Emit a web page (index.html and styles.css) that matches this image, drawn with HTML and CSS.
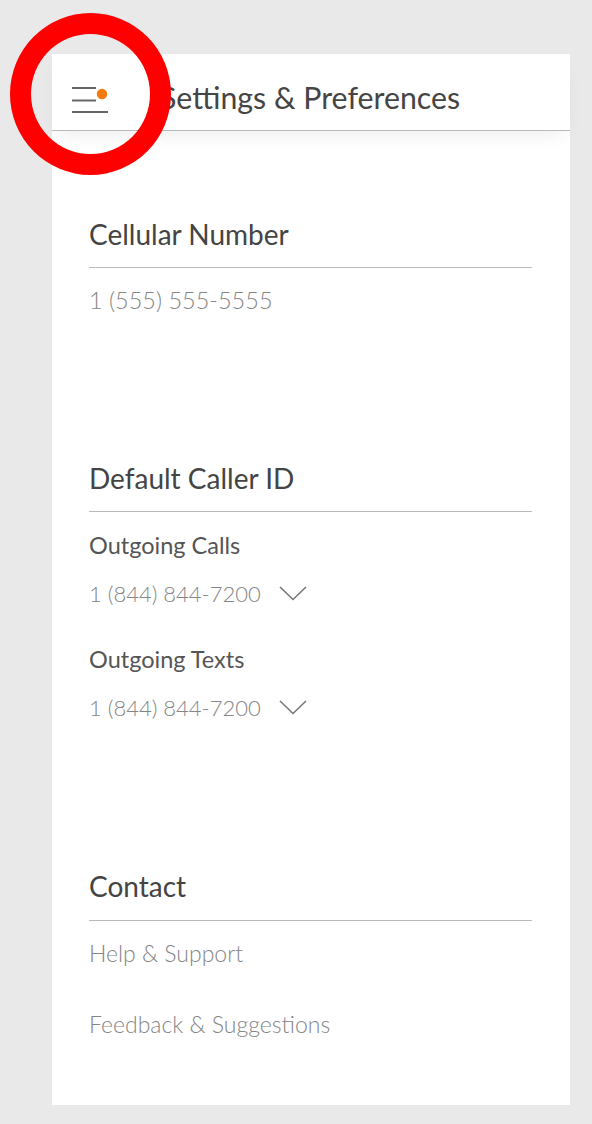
FILE: index.html
```html
<!DOCTYPE html>
<html lang="en">

<head>
    <meta charset="UTF-8">
    <link rel="stylesheet" href="styles.css">
    <title>Settings & Preferences</title>
</head>

<body>
    <section class="card">
        <header class="topbar">
            <div class="menu">
                <svg width="42" height="32" viewBox="0 0 42 32">
                    <line x1="0" y1="4" x2="24" y2="4" stroke="#666" stroke-width="2"/>
                    <line x1="0" y1="16.5" x2="24" y2="16.5" stroke="#666" stroke-width="2"/>
                    <line x1="0" y1="28" x2="36" y2="28" stroke="#666" stroke-width="2"/>
                    <circle cx="30" cy="10" r="5.2" fill="#f47a0c"/>
                </svg>
            </div>
            <h1 class="title">Settings &amp; Preferences</h1>
        </header>

        <div class="content">
            <div class="group cellular">
                <h2 class="heading">Cellular Number</h2>
                <div class="value big">1 (555) 555-5555</div>
            </div>

            <div class="group callerid">
                <h2 class="heading">Default Caller ID</h2>
                <div class="label">Outgoing Calls</div>
                <div class="value select">1 (844) 844-7200
                    <svg class="chev" width="28" height="15" viewBox="0 0 28 15">
                        <polyline points="1,1 14,13.5 27,1" fill="none" stroke="#777" stroke-width="1.6"/>
                    </svg>
                </div>
                <div class="label second">Outgoing Texts</div>
                <div class="value select">1 (844) 844-7200
                    <svg class="chev" width="28" height="15" viewBox="0 0 28 15">
                        <polyline points="1,1 14,13.5 27,1" fill="none" stroke="#777" stroke-width="1.6"/>
                    </svg>
                </div>
            </div>

            <div class="group contact">
                <h2 class="heading">Contact</h2>
                <div class="value link">Help &amp; Support</div>
                <div class="value link">Feedback &amp; Suggestions</div>
            </div>
        </div>
    </section>

    <!-- annotation ring -->
    <div class="ring"></div>
</body>

</html>
```

FILE: styles.css
```css
* {
    font-family: 'Lato', sans-serif;
    box-sizing: border-box;
}

body {
    margin: 0;
    background-color: #e9e9e9;
    padding: 54px 22px 19px 52px;
}

.card {
    background-color: white;
    width: 518px;
    height: 1051px;
}

.topbar {
    display: flex;
    align-items: flex-start;
    height: 77px;
    border-bottom: 1px solid #b9b9b9;
    box-shadow: 0px 10px 18px -6px rgba(0, 0, 0, 0.07);
    padding: 25px 0 0 20px;
}

.menu {
    width: 88px;
    height: 32px;
    margin-top: 5px;
}

.title {
    margin: 0;
    font-size: 30.3px;
    line-height: 36px;
    font-weight: 400;
    color: #454545;
}

.content {
    padding: 86px 38px 0 37px;
}

.heading {
    margin: 0;
    font-size: 28px;
    line-height: 34px;
    font-weight: 400;
    color: #444;
    padding-bottom: 16px;
    border-bottom: 1px solid #bbb;
}

.value {
    font-size: 22px;
    line-height: 26px;
    font-weight: 300;
    color: #858585;
}

.value.big {
    font-size: 23.5px;
    line-height: 29px;
    margin-top: 18px;
}

.callerid {
    margin-top: 146px;
}

.label {
    font-size: 23.5px;
    line-height: 28px;
    font-weight: 400;
    color: #555;
    margin-top: 19px;
}

.label.second {
    margin-top: 38px;
}

.select {
    display: flex;
    align-items: center;
    gap: 18px;
    margin-top: 22px;
}

.chev {
    margin-top: -1px;
}

.contact {
    margin-top: 148px;
}

.contact .heading {
    padding-bottom: 17px;
}

.link {
    font-size: 23px;
    line-height: 28px;
    margin-top: 18px;
}

.link + .link {
    margin-top: 43px;
}

.ring {
    position: absolute;
    left: 10px;
    top: 13px;
    width: 161px;
    height: 162px;
    border: 21px solid #ff0000;
    border-radius: 50%;
}
```
